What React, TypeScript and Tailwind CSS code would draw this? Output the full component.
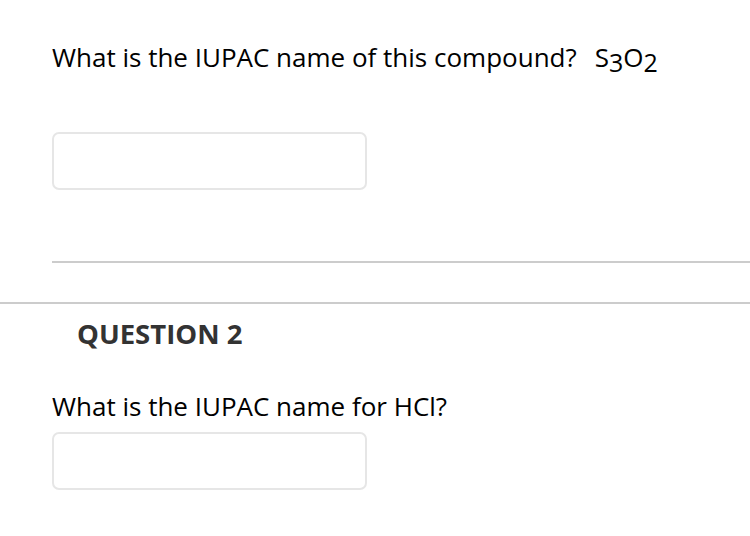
import React from 'react';

function AnswerBox(): JSX.Element {
  return (
    <input
      type="text"
      className="block w-[315px] h-[58px] rounded-[7px] border-2 border-[#e6e6e6] bg-white outline-none"
    />
  );
}

export default function App(): JSX.Element {
  return (
    <div className="w-[750px] h-[536px] bg-white text-black font-['Open_Sans',sans-serif] text-[26px] leading-[36px] overflow-hidden">
      <div className="pt-[39px] pl-[52px]">
        <p className="whitespace-nowrap">
          What is the IUPAC name of this compound?
          <span className="ml-[18px]">
            S<span className="align-[-5px] text-[25px]">3</span>O<span className="align-[-5px] text-[25px]">2</span>
          </span>
        </p>
        <div className="mt-[52px]">
          <AnswerBox />
        </div>
        <div className="mt-[71px] h-[2px] bg-[#cccccc]" />
      </div>

      <div className="mt-[39px] h-[2px] bg-[#cccccc]" />

      <div className="pl-[52px]">
        <h2 className="mt-[12px] pl-[25px] text-[27.5px] font-bold text-[#333333]">QUESTION 2</h2>
        <p className="mt-[36px]">What is the IUPAC name for HCl?</p>
        <div className="mt-[8px]">
          <AnswerBox />
        </div>
      </div>
    </div>
  );
}
